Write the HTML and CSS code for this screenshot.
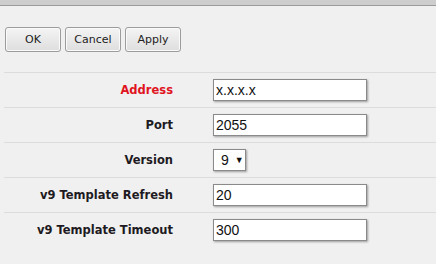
FILE: index.html
```html
<!DOCTYPE html>
<html lang="en">
<head>
    <meta charset="UTF-8">
    <title>NetFlow Settings</title>
    <link rel="stylesheet" href="styles.css">
</head>
<body>
    <div class="top-bar"></div>

    <!-- action buttons -->
    <div class="actions">
        <button class="btn">OK</button>
        <button class="btn">Cancel</button>
        <button class="btn">Apply</button>
    </div>

    <!-- settings form -->
    <div class="form">
        <div class="row">
            <label class="label required">Address</label>
            <div class="field"><input class="text-input" type="text" value="x.x.x.x"></div>
        </div>
        <div class="row">
            <label class="label">Port</label>
            <div class="field"><input class="text-input" type="text" value="2055"></div>
        </div>
        <div class="row">
            <label class="label">Version</label>
            <div class="field">
                <div class="select-box"><span class="select-value">9</span><span class="select-arrow">&#9660;</span></div>
            </div>
        </div>
        <div class="row">
            <label class="label">v9 Template Refresh</label>
            <div class="field"><input class="text-input" type="text" value="20"></div>
        </div>
        <div class="row">
            <label class="label">v9 Template Timeout</label>
            <div class="field"><input class="text-input" type="text" value="300"></div>
        </div>
    </div>
</body>
</html>
```

FILE: styles.css
```css
* {
    margin: 0;
    padding: 0;
    box-sizing: border-box;
}

body {
    font-family: 'DejaVu Sans', Verdana, sans-serif;
    background-color: #f0f0f0;
    overflow: hidden;
}

.top-bar {
    height: 6px;
    background: #cdcdcd;
    border-bottom: 1px solid #9a9a9a;
}

.actions {
    display: flex;
    gap: 4px;
    padding: 21px 0 0 5px;
    height: 66px;
}

.btn {
    width: 56px;
    height: 25px;
    font-family: 'DejaVu Sans', Verdana, sans-serif;
    font-size: 11px;
    color: #222;
    background: linear-gradient(#f4f4f4, #dedede);
    border: 1px solid #9c9c9c;
    border-radius: 3px;
    box-shadow: 0 0 0 1px #fafafa inset;
}

.form {
    margin-left: 4px;
}

.row {
    display: grid;
    grid-template-columns: 169px 1fr;
    column-gap: 40px;
    align-items: center;
    height: 35px;
    border-top: 1px solid #dcdcdc;
}

.label {
    text-align: right;
    font-weight: bold;
    font-size: 11.5px;
    color: #1e1a22;
}

.label.required {
    color: #e0141e;
}

.field {
    display: flex;
    align-items: center;
}

.text-input {
    width: 154px;
    height: 22px;
    padding: 0 2px;
    font-family: 'Liberation Sans', Arial, sans-serif;
    font-size: 14px;
    color: #111;
    background: #fff;
    border: 1px solid #8a8a8a;
    box-shadow: 1px 1px 2px rgba(0,0,0,0.35);
    outline: none;
}

.select-box {
    width: 33px;
    height: 22px;
    display: flex;
    align-items: center;
    gap: 6px;
    padding-left: 7px;
    background: #fff;
    border: 1px solid #8a8a8a;
    box-shadow: 1px 1px 2px rgba(0,0,0,0.35);
    font-family: 'Liberation Sans', Arial, sans-serif;
    font-size: 14px;
    color: #111;
}

.select-arrow {
    font-size: 9px;
    color: #111;
}
```
